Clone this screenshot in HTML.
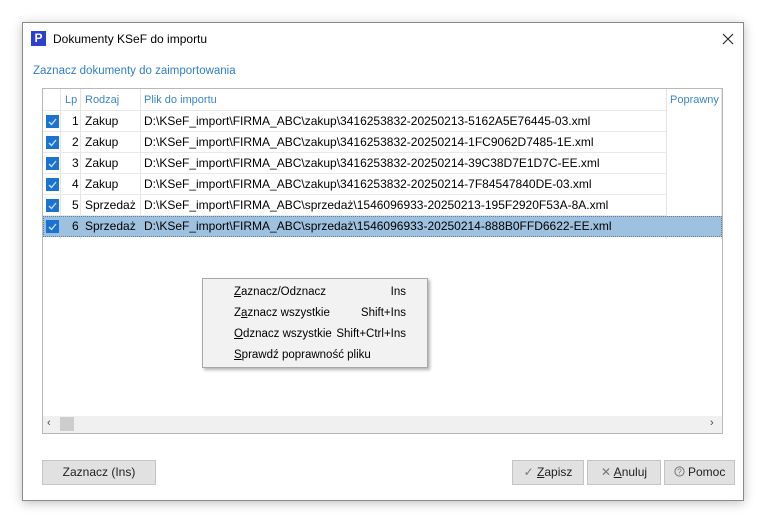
<!DOCTYPE html>
<html><head><meta charset="utf-8"><style>
*{box-sizing:border-box;margin:0;padding:0}
body{width:768px;height:528px;background:#fff;font-family:"Liberation Sans",sans-serif;font-size:12px;color:#000;position:relative;overflow:hidden}
.win{position:absolute;left:22px;top:22px;width:722px;height:479px;background:#fff;border:1px solid #8a8a8a;box-shadow:0 2px 10px rgba(0,0,0,.25)}
.abs{position:absolute}
.grid{position:absolute;left:42px;top:88px;width:681px;height:346px;border:1px solid #b8b8b8;background:#fff}
.row{position:absolute;left:0;width:624px;height:21px;border-bottom:1px solid #e8e8e8}
.c{position:absolute;top:0;height:21px;line-height:21px;white-space:nowrap;overflow:hidden}
.cb{position:absolute;left:3px;top:4px;width:13px;height:13px;background:#1a73d0}
.cb svg{position:absolute;left:1px;top:1px}
.vl{position:absolute;top:0;width:1px;height:128px;background:#e4e4e4}
.btn{position:absolute;height:25px;background:#e1e1e1;border:1px solid #c4c4c4;font-size:12px;line-height:23px;text-align:center;color:#222}
.menu{position:absolute;left:202px;top:278px;width:226px;height:90px;background:#f2f2f2;border:1px solid #a8a8a8;box-shadow:2px 2px 3px rgba(0,0,0,.3);font-size:11.5px}
.mi{position:absolute;left:31px;height:20px;line-height:20px}
.sc{position:absolute;right:21px;height:20px;line-height:20px}
</style></head><body>
<div class="win">
 <div class="abs" style="left:8px;top:8px;width:15px;height:15px;background:#2b3fd1;color:#fff;font-weight:bold;font-size:12px;line-height:15px;text-align:center">P</div>
 <div class="abs" style="left:30px;top:9px;font-size:12px">Dokumenty KSeF do importu</div>
 <svg class="abs" style="left:699px;top:10px" width="12" height="12"><path d="M1 1L11 11M11 1L1 11" stroke="#222" stroke-width="1.1"/></svg>
 <div class="abs" style="left:10px;top:42px;font-size:11.5px;color:#2f7fc8">Zaznacz dokumenty do zaimportowania</div>
</div>
<div class="grid">
 <div class="row" style="top:0;height:22px;border-bottom:1px solid #e8e8e8;color:#3a86c9;font-size:11px">
  <div class="c" style="left:22px;top:1px">Lp</div><div class="c" style="left:42px;top:1px">Rodzaj</div><div class="c" style="left:101px;top:1px">Plik do importu</div><div class="c" style="left:627px;top:1px">Poprawny</div>
 </div>
 <div class="vl" style="left:17px;height:150px"></div><div class="vl" style="left:37px;height:150px"></div><div class="vl" style="left:97px;height:150px"></div><div class="vl" style="left:623px;height:150px"></div><div class="vl" style="left:678px;height:150px"></div>
 <div class="row" style="top:22px"><div class="cb"><svg width="11" height="11"><path d="M2 6l2.5 2.5L9 3" stroke="#cfe3f7" stroke-width="1.3" fill="none"/></svg></div><div class="c" style="left:29px">1</div><div class="c" style="left:42px">Zakup</div><div class="c" style="left:101px">D:\KSeF_import\FIRMA_ABC\zakup\3416253832-20250213-5162A5E76445-03.xml</div></div>
 <div class="row" style="top:43px"><div class="cb"><svg width="11" height="11"><path d="M2 6l2.5 2.5L9 3" stroke="#cfe3f7" stroke-width="1.3" fill="none"/></svg></div><div class="c" style="left:29px">2</div><div class="c" style="left:42px">Zakup</div><div class="c" style="left:101px">D:\KSeF_import\FIRMA_ABC\zakup\3416253832-20250214-1FC9062D7485-1E.xml</div></div>
 <div class="row" style="top:64px"><div class="cb"><svg width="11" height="11"><path d="M2 6l2.5 2.5L9 3" stroke="#cfe3f7" stroke-width="1.3" fill="none"/></svg></div><div class="c" style="left:29px">3</div><div class="c" style="left:42px">Zakup</div><div class="c" style="left:101px">D:\KSeF_import\FIRMA_ABC\zakup\3416253832-20250214-39C38D7E1D7C-EE.xml</div></div>
 <div class="row" style="top:85px"><div class="cb"><svg width="11" height="11"><path d="M2 6l2.5 2.5L9 3" stroke="#cfe3f7" stroke-width="1.3" fill="none"/></svg></div><div class="c" style="left:29px">4</div><div class="c" style="left:42px">Zakup</div><div class="c" style="left:101px">D:\KSeF_import\FIRMA_ABC\zakup\3416253832-20250214-7F84547840DE-03.xml</div></div>
 <div class="row" style="top:106px"><div class="cb"><svg width="11" height="11"><path d="M2 6l2.5 2.5L9 3" stroke="#cfe3f7" stroke-width="1.3" fill="none"/></svg></div><div class="c" style="left:29px">5</div><div class="c" style="left:42px">Sprzedaż</div><div class="c" style="left:101px">D:\KSeF_import\FIRMA_ABC\sprzedaż\1546096933-20250213-195F2920F53A-8A.xml</div></div>
 <div class="row" style="top:127px;width:679px;background:#9fc1e0;border:1px dotted #5a7da0"><div class="cb" style="top:3px;left:2px"><svg width="11" height="11"><path d="M2 6l2.5 2.5L9 3" stroke="#cfe3f7" stroke-width="1.3" fill="none"/></svg></div><div class="c" style="left:28px;top:-1px">6</div><div class="c" style="left:41px;top:-1px;width:55px">Sprzedaż</div><div class="c" style="left:100px;top:-1px">D:\KSeF_import\FIRMA_ABC\sprzedaż\1546096933-20250214-888B0FFD6622-EE.xml</div></div>
 <div class="abs" style="left:0;top:327px;width:679px;height:17px;background:#f0f0f0">
  <div class="abs" style="left:4px;top:1px;font-size:11px;color:#444">‹</div>
  <div class="abs" style="left:17px;top:1px;width:14px;height:14px;background:#cdcdcd"></div>
  <div class="abs" style="left:667px;top:1px;font-size:11px;color:#444">›</div>
 </div>
</div>
<div class="menu">
 <div class="mi" style="top:3px"><u>Z</u>aznacz/Odznacz</div><div class="sc" style="top:3px">Ins</div>
 <div class="mi" style="top:24px">Z<u>a</u>znacz wszystkie</div><div class="sc" style="top:24px">Shift+Ins</div>
 <div class="mi" style="top:45px"><u>O</u>dznacz wszystkie</div><div class="sc" style="top:45px">Shift+Ctrl+Ins</div>
 <div class="mi" style="top:66px"><u>S</u>prawdź poprawność pliku</div>
</div>
<div class="btn" style="left:42px;top:460px;width:114px">Zaznacz (Ins)</div>
<div class="btn" style="left:512px;top:460px;width:72px"><span style="color:#777">✓</span> <u>Z</u>apisz</div>
<div class="btn" style="left:587px;top:460px;width:74px"><span style="color:#777">✕</span> <u>A</u>nuluj</div>
<div class="btn" style="left:664px;top:460px;width:71px"><svg width="11" height="11" style="vertical-align:-1px"><circle cx="5.5" cy="5.5" r="4.6" fill="none" stroke="#777"/><text x="5.5" y="8.5" font-size="8" text-anchor="middle" fill="#777" font-family="Liberation Sans">?</text></svg> Pomoc</div>
</body></html>
